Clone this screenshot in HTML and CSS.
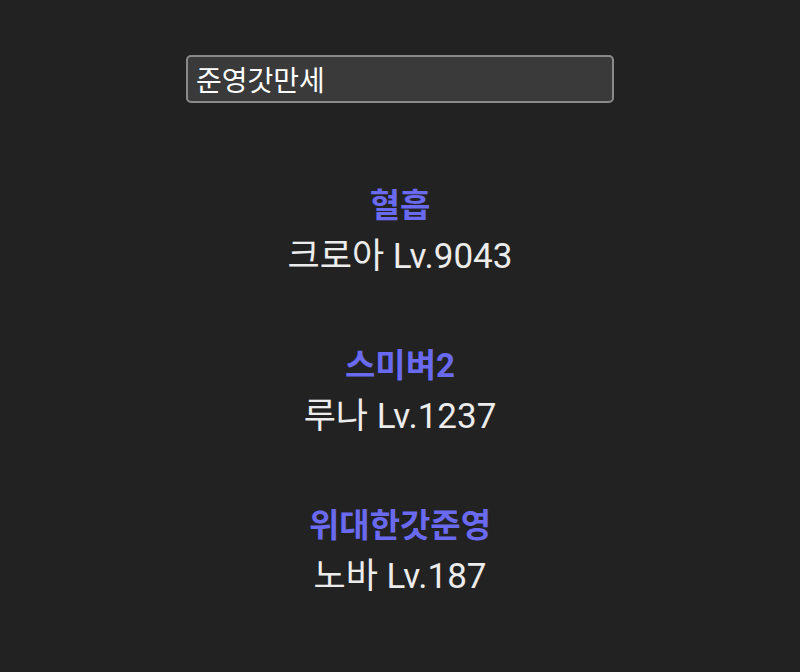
FILE: index.html
```html
<!DOCTYPE html>
<html lang="ko">
<head>
  <meta charset="UTF-8" />
  <title>랭킹</title>
  <link rel="stylesheet" href="styles.css">
</head>
<body>
  <div class="page">
    <input type="text" class="search" value="준영갓만세" />

    <div class="guild-list">
      <div class="guild">
        <div class="guild-name">혈흡</div>
        <div class="guild-char">크로아 Lv.9043</div>
      </div>
      <div class="guild">
        <div class="guild-name">스미벼2</div>
        <div class="guild-char">루나 Lv.1237</div>
      </div>
      <div class="guild">
        <div class="guild-name">위대한갓준영</div>
        <div class="guild-char">노바 Lv.187</div>
      </div>
    </div>
  </div>
</body>
</html>
```

FILE: styles.css
```css
body {
  margin: 0;
  padding: 0;
  background: #222222;
  color: #ececec;
  font-family: Roboto, "Noto Sans CJK KR", sans-serif;
}
.page {
  display: flex;
  flex-direction: column;
  align-items: center;
  padding-top: 55px;
}
.search {
  box-sizing: border-box;
  width: 428px;
  height: 48px;
  padding: 0 8px;
  border: 2px solid #8a8a8a;
  border-radius: 5px;
  background: #3a3a3a;
  color: #ffffff;
  font-family: Roboto, "Noto Sans CJK KR", sans-serif;
  font-size: 28px;
  outline: none;
}
.guild-list {
  display: flex;
  flex-direction: column;
  gap: 57px;
  margin-top: 77px;
}
.guild {
  display: flex;
  flex-direction: column;
  align-items: center;
}
.guild-name {
  color: #6a6af0;
  font-size: 33px;
  font-weight: 700;
  line-height: 51px;
}
.guild-char {
  font-size: 35px;
  line-height: 52px;
}
```
